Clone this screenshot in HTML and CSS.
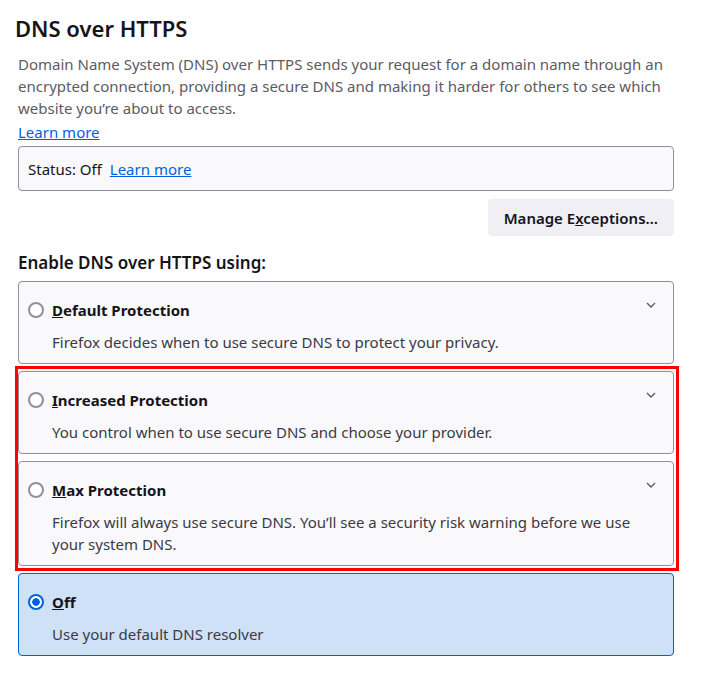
FILE: index.html
```html
<!DOCTYPE html>
<html lang="en">
<head>
<meta charset="utf-8">
<link rel="stylesheet" href="styles.css">
</head>
<body>
<main class="page">
  <h1 class="title">DNS over HTTPS</h1>
  <p class="desc">Domain Name System (DNS) over HTTPS sends your request for a domain name through an encrypted connection, providing a secure DNS and making it harder for others to see which website you’re about to access.</p>
  <a class="link block-link" href="#">Learn more</a>
  <div class="status">Status: Off <a class="link" href="#">Learn more</a></div>
  <div class="btn-row"><button class="btn">Manage E<u>x</u>ceptions…</button></div>
  <h2 class="subtitle">Enable DNS over HTTPS using:</h2>
  <div class="options">
    <div class="card">
      <div class="card-head">
        <span class="radio"></span>
        <span class="card-title"><u>D</u>efault Protection</span>
        <svg class="chev" width="10" height="6" viewBox="0 0 10 6"><path d="M1 1l4 4 4-4" fill="none" stroke="#5b5b66" stroke-width="1.4"/></svg>
      </div>
      <p class="card-desc">Firefox decides when to use secure DNS to protect your privacy.</p>
    </div>
    <div class="card">
      <div class="card-head">
        <span class="radio"></span>
        <span class="card-title"><u>I</u>ncreased Protection</span>
        <svg class="chev" width="10" height="6" viewBox="0 0 10 6"><path d="M1 1l4 4 4-4" fill="none" stroke="#5b5b66" stroke-width="1.4"/></svg>
      </div>
      <p class="card-desc">You control when to use secure DNS and choose your provider.</p>
    </div>
    <div class="card">
      <div class="card-head">
        <span class="radio"></span>
        <span class="card-title"><u>M</u>ax Protection</span>
        <svg class="chev" width="10" height="6" viewBox="0 0 10 6"><path d="M1 1l4 4 4-4" fill="none" stroke="#5b5b66" stroke-width="1.4"/></svg>
      </div>
      <p class="card-desc">Firefox will always use secure DNS. You’ll see a security risk warning before we use your system DNS.</p>
    </div>
    <div class="card selected">
      <div class="card-head">
        <span class="radio checked"></span>
        <span class="card-title"><u>O</u>ff</span>
      </div>
      <p class="card-desc">Use your default DNS resolver</p>
    </div>
    <div class="highlight"></div>
  </div>
</main>
</body>
</html>
```
FILE: styles.css
```css
html, body {
  margin: 0;
  padding: 0;
  background: #ffffff;
}
body {
  font-family: "Noto Sans", "Open Sans", sans-serif;
  font-size: 15px;
  color: #15141a;
}
.page {
  padding: 13px 0 0 18px;
  width: 656px;
}
.title {
  margin: 0 0 0 -3px;
  font-size: 22px;
  line-height: 30px;
  font-weight: 600;
  color: #15141a;
}
.desc {
  margin: 10px 0 0;
  line-height: 22px;
  color: #5b5b66;
}
.link {
  color: #0061e0;
  text-decoration: underline;
}
.block-link {
  display: block;
  width: max-content;
  margin-top: 2px;
  line-height: 22px;
}
.status {
  margin-top: 3px;
  border: 1px solid #8f8f9d;
  border-radius: 4px;
  background: #f9f9fb;
  padding: 11px 9px 10px;
  line-height: 22px;
}
.status .link {
  margin-left: 4px;
}
.btn-row {
  display: flex;
  justify-content: flex-end;
  margin-top: 8px;
}
.btn {
  font-family: inherit;
  font-size: 15px;
  font-weight: 600;
  color: #15141a;
  background: #f0f0f4;
  border: none;
  border-radius: 4px;
  height: 37px;
  padding: 0 16px;
}
.subtitle {
  margin: 15px 0 6px;
  font-size: 17px;
  line-height: 24px;
  font-weight: 600;
}
.options {
  position: relative;
  display: flex;
  flex-direction: column;
  gap: 7px;
}
.card {
  border: 1px solid #8f8f9d;
  border-radius: 4px;
  background: #f9f9fb;
  padding: 16px 9px 10px;
}
.card.selected {
  background: #cfe1f7;
  border-color: #0061e0;
}
.card-head {
  display: flex;
  align-items: center;
  height: 24px;
  gap: 8px;
}
.card-title {
  font-weight: 700;
  flex: 1;
}
.chev {
  margin: -10px 8px 0 0;
}
.radio {
  width: 16px;
  height: 16px;
  box-sizing: border-box;
  border: 2px solid #8f8f9d;
  border-radius: 50%;
  background: #fff;
}
.radio.checked {
  border-color: #0061e0;
  background: radial-gradient(circle, #0061e0 0 3.5px, #fff 4px);
}
.card-desc {
  margin: 9px 0 0 24px;
  line-height: 22px;
  color: #3a3944;
}
.highlight {
  position: absolute;
  left: -3px;
  top: 85px;
  width: 658px;
  height: 199px;
  border: 3px solid #ff0000;
  pointer-events: none;
}
```
